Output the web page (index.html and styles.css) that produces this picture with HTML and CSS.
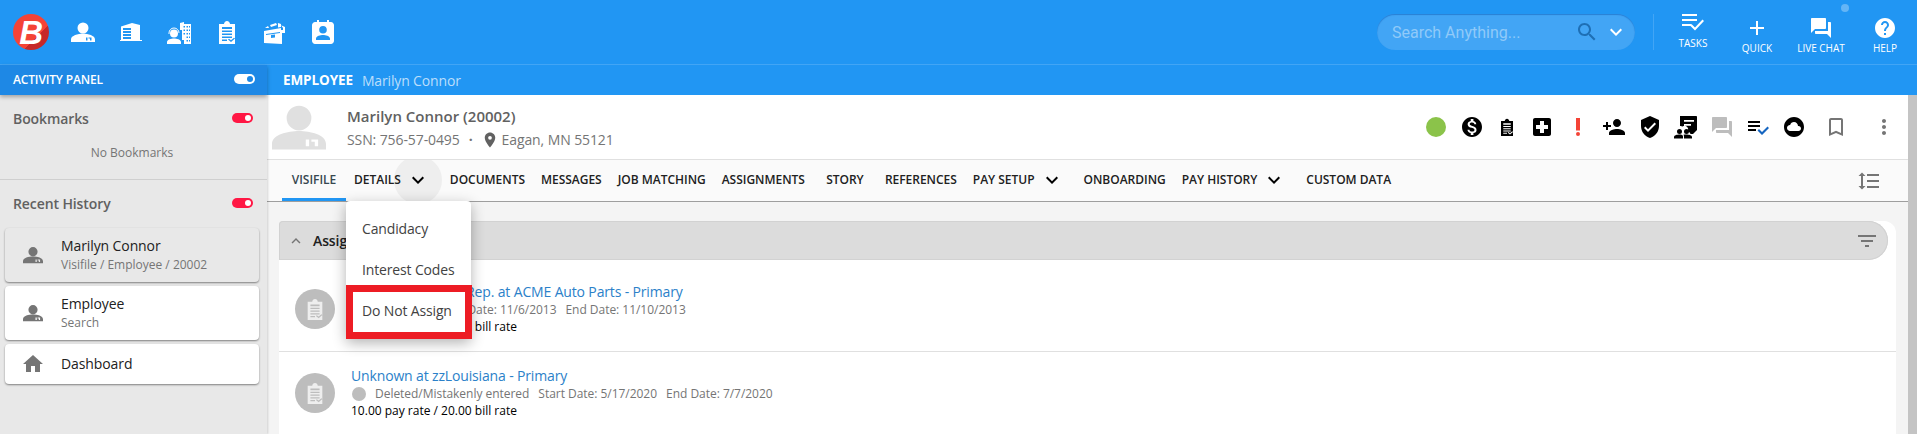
FILE: index.html
```html
<!DOCTYPE html>
<html lang="en">
<head>
<meta charset="utf-8">
<title>Employee - Marilyn Connor</title>
<link rel="stylesheet" href="styles.css">
</head>
<body>
<svg class="defs" width="0" height="0" aria-hidden="true">
  <symbol id="i-emp" viewBox="0 0 24 24"><path fill-rule="evenodd" d="M12 2.500a5.500 5.500 0 1 1 0 11 5.500 5.500 0 0 1 0-11zM0 22v-2.500C0 15.500 7 13.800 12 13.800s12 1.700 12 5.700V22zM15 17.500v3h1.500v-3zM17.500 17.500v1h1.500v2h1.500v-3z"/></symbol>
  <symbol id="i-building" viewBox="0 0 24 24"><path fill-rule="evenodd" d="M2 6.500 13 3l8 2v15h2v1H1v-1h1zM4 8v2h8V8zM4 11v2h8v-2zM4 14v2h8v-2zM4 17v2h8v-2z"/></symbol>
  <symbol id="i-center" viewBox="0 0 24 24"><path fill-rule="evenodd" d="M13 3l4-1v2h7v20h-7v-4h-2V10h-2zM16.500 6v1.500H18V6zM19.500 6v1.500H21V6zM22 6v1.500h1V6zM16.500 9.500V11H18V9.500zM19.500 9.500V11H21V9.500zM22 9.500V11h1V9.500zM16.500 13v1.500H18V13zM19.500 13v1.500H21V13zM22 13v1.500h1V13zM19.500 16.500V18H21v-1.500zM22 16.500V18h1v-1.500zM19.500 20v1.500H21V20zM22 20v1.500h1V20z"/><path d="M7 9.500a4 4 0 1 1 0 8 4 4 0 0 1 0-8zM0 24v-2c0-2.500 4.500-3.500 7-3.500s7 1 7 3.500v2z"/><path fill="none" stroke="currentColor" stroke-width="1" d="M2 14v-1a5 5 0 0 1 10 0"/></symbol>
  <symbol id="i-clip" viewBox="0 0 24 24"><path fill-rule="evenodd" d="M4 4h5c0-1.500 1.400-3 3-3s3 1.500 3 3h5v20H4zM7 7v2h10V7zM7 10.500v1.500h10v-1.500zM7 13.500V15h10v-1.500zM7 16.500V18h10v-1.500zM7 19.500V21h5v-1.500zM13 19.500l3 2.500 4-3.500-1-.8-3 2.500-2-1.500z"/></symbol>
  <symbol id="i-case" viewBox="0 0 24 24"><path fill-rule="evenodd" d="M1 11l17-3v2h2V8l-2-3-3-1-2-1 9 4v6h-3v11L1 23zM3 14v1l14-2v-1zM8 15v3l4-.5v-3z"/><path d="M2 8l3-2 1 2zM7 5l6-2 1 2-6 2zM15 3l3 1v3l-3 .5z"/></symbol>
  <symbol id="i-contact" viewBox="0 0 24 24"><path fill-rule="evenodd" d="M6 0h2v2h8V0h2v2h2c1.500 0 3 1.500 3 3v16c0 1.500-1.500 3-3 3H4c-1.500 0-3-1.500-3-3V5c0-1.500 1.500-3 3-3h2zM12 6a3.800 3.800 0 1 0 0 7.600A3.800 3.800 0 0 0 12 6zM5 20h14v-1.500c0-2.500-4.500-3.500-7-3.500s-7 1-7 3.500z"/></symbol>
  <symbol id="i-tasks" viewBox="0 0 24 24"><path d="M1 3h15v2H1zM1 8h15v2H1zM1 13h9v2H1zM23 10l-9 9.500-5-5 1.500-1.500 3.500 3.500 7.500-8z"/></symbol>
  <symbol id="i-plus" viewBox="0 0 24 24"><path d="M19 13h-6v6h-2v-6H5v-2h6V5h2v6h6v2z"/></symbol>
  <symbol id="i-forum" viewBox="0 0 24 24"><path d="M21 6h-2v9H6v2c0 .55.45 1 1 1h11l4 4V7c0-.55-.45-1-1-1zm-4 6V3c0-.55-.45-1-1-1H3c-.55 0-1 .45-1 1v14l4-4h10c.55 0 1-.45 1-1z"/></symbol>
  <symbol id="i-help" viewBox="0 0 24 24"><path d="M12 2C6.480 2 2 6.480 2 12s4.480 10 10 10 10-4.480 10-10S17.520 2 12 2zm1 17h-2v-2h2v2zm2.070-7.750l-.9.920C13.450 12.900 13 13.500 13 15h-2v-.5c0-1.100.45-2.100 1.170-2.830l1.240-1.260c.37-.36.590-.86.590-1.410 0-1.100-.9-2-2-2s-2 .9-2 2H8c0-2.210 1.790-4 4-4s4 1.790 4 4c0 .88-.36 1.680-.93 2.250z"/></symbol>
  <symbol id="i-search" viewBox="0 0 24 24"><path d="M15.500 14h-.79l-.28-.27C15.410 12.590 16 11.110 16 9.500 16 5.910 13.090 3 9.500 3S3 5.910 3 9.500 5.910 16 9.500 16c1.610 0 3.090-.59 4.230-1.570l.27.280v.79l5 4.990L20.490 19l-4.990-5zm-6 0C7.010 14 5 11.990 5 9.500S7.010 5 9.500 5 14 7.010 14 9.500 11.990 14 9.500 14z"/></symbol>
  <symbol id="i-down" viewBox="0 0 24 24"><path d="M16.590 8.590L12 13.170 7.410 8.590 6 10l6 6 6-6z"/></symbol>
  <symbol id="i-up" viewBox="0 0 24 24"><path d="M12 8l-6 6 1.410 1.410L12 10.830l4.590 4.580L18 14z"/></symbol>
  <symbol id="i-home" viewBox="0 0 24 24"><path d="M10 20v-6h4v6h5v-8h3L12 3 2 12h3v8z"/></symbol>
  <symbol id="i-pin" viewBox="0 0 24 24"><path d="M12 2C8.130 2 5 5.130 5 9c0 5.250 7 13 7 13s7-7.750 7-13c0-3.870-3.130-7-7-7zm0 9.500a2.500 2.500 0 0 1 0-5 2.500 2.500 0 0 1 0 5z"/></symbol>
  <symbol id="i-dollar" viewBox="0 0 24 24"><path d="M12 2C6.480 2 2 6.480 2 12s4.480 10 10 10 10-4.480 10-10S17.520 2 12 2zm1.410 16.090V20h-2.670v-1.930c-1.710-.36-3.160-1.460-3.270-3.400h1.960c.1 1.050.82 1.870 2.650 1.870 1.960 0 2.400-.98 2.400-1.590 0-.83-.44-1.610-2.670-2.140-2.480-.6-4.180-1.620-4.180-3.670 0-1.720 1.390-2.840 3.110-3.210V4h2.670v1.950c1.860.45 2.790 1.860 2.870 3.390H14.300c-.05-1.110-.64-1.870-2.220-1.870-1.500 0-2.400.68-2.400 1.640 0 .84.65 1.390 2.670 1.910s4.180 1.390 4.180 3.910c-.01 1.830-1.380 2.830-3.120 3.160z"/></symbol>
  <symbol id="i-hospital" viewBox="0 0 24 24"><path d="M19 3H5c-1.100 0-1.990.9-1.990 2L3 19c0 1.100.9 2 2 2h14c1.100 0 2-.9 2-2V5c0-1.100-.9-2-2-2zm-1 11h-4v4h-4v-4H6v-4h4V6h4v4h4v4z"/></symbol>
  <symbol id="i-alert" viewBox="0 0 24 24"><path d="M10 3h4v12.500h-4zM12 17a2 2 0 1 1 0 4 2 2 0 0 1 0-4z"/></symbol>
  <symbol id="i-add-person" viewBox="0 0 24 24"><path d="M15 12c2.210 0 4-1.790 4-4s-1.790-4-4-4-4 1.790-4 4 1.790 4 4 4zm-9-2V7H4v3H1v2h3v3h2v-3h3v-2H6zm9 4c-2.670 0-8 1.340-8 4v2h16v-2c0-2.660-5.330-4-8-4z"/></symbol>
  <symbol id="i-shield" viewBox="0 0 24 24"><path d="M12 1L3 5v6c0 5.550 3.840 10.740 9 12 5.160-1.260 9-6.450 9-12V5l-9-4zm-2 16l-4-4 1.410-1.410L10 14.170l6.590-6.590L18 9l-8 8z"/></symbol>
  <symbol id="i-feedback" viewBox="0 0 24 24"><path fill-rule="evenodd" d="M6 1h16c.6 0 1 .4 1 1v13l-4 4h-2.500c-.4-1.400-1.600-2.300-3-2.800a3.500 3.500 0 0 0-5-4.700A3.500 3.500 0 0 0 6 11zM10 5v1.800h10V5zM10 9v1.800h7V9z"/><path d="M5.500 14a2.500 2.500 0 1 1 0 5 2.500 2.500 0 0 1 0-5zM12.500 14a2.500 2.500 0 1 1 0 5 2.500 2.500 0 0 1 0-5zM0 23.500V22c0-1.800 3.500-2.500 5.500-2.500S9 20 9 21.500v2zM10 23.500v-2c0-.7-.2-1.300-.6-1.800.9-.2 2.100-.2 3.100-.2 2 0 5.500.7 5.500 2.500v1.500z"/></symbol>
  <symbol id="i-check-list" viewBox="0 0 24 24"><path d="M14 10H2v2h12v-2zm0-4H2v2h12V6zM2 16h8v-2H2v2z"/><path fill="#1565c0" d="M21.500 11.500L23 13l-6.990 7-4.510-4.500L13 14l3.010 3 5.490-5.500z"/></symbol>
  <symbol id="i-cloud" viewBox="0 0 24 24"><path d="M12 2C6.480 2 2 6.480 2 12s4.480 10 10 10 10-4.480 10-10S17.520 2 12 2zm4.500 14H8c-1.660 0-3-1.340-3-3s1.340-3 3-3l.14.01C8.580 8.280 10.130 7 12 7c2.210 0 4 1.790 4 4h.5c1.380 0 2.500 1.120 2.500 2.500S17.880 16 16.500 16z"/></symbol>
  <symbol id="i-bookmark" viewBox="0 0 24 24"><path d="M17 3H7c-1.100 0-1.990.9-1.990 2L5 21l7-3 7 3V5c0-1.100-.9-2-2-2zm0 15l-5-2.180L7 18V5h10v13z"/></symbol>
  <symbol id="i-more" viewBox="0 0 24 24"><path d="M12 8c1.100 0 2-.9 2-2s-.9-2-2-2-2 .9-2 2 .9 2 2 2zm0 2c-1.100 0-2 .9-2 2s.9 2 2 2 2-.9 2-2-.9-2-2-2zm0 6c-1.100 0-2 .9-2 2s.9 2 2 2 2-.9 2-2-.9-2-2-2z"/></symbol>
  <symbol id="i-spacing" viewBox="0 0 24 24"><path d="M6 7h2.500L5 3.500 1.500 7H4v10H1.500L5 20.500 8.500 17H6V7zm4-2v2h12V5H10zm0 14h12v-2H10v2zm0-6h12v-2H10v2z"/></symbol>
  <symbol id="i-filter" viewBox="0 0 24 24"><path d="M10 18h4v-2h-4v2zM3 6v2h18V6H3zm3 7h12v-2H6v2z"/></symbol>
</svg>

<header class="topbar">
  <div class="logo"><span class="logo-b">B</span></div>
  <nav class="appnav">
    <a class="appnav-item"><svg class="ic"><use href="#i-emp"/></svg></a>
    <a class="appnav-item"><svg class="ic"><use href="#i-building"/></svg></a>
    <a class="appnav-item"><svg class="ic"><use href="#i-center"/></svg></a>
    <a class="appnav-item"><svg class="ic"><use href="#i-clip"/></svg></a>
    <a class="appnav-item"><svg class="ic"><use href="#i-case"/></svg></a>
    <a class="appnav-item"><svg class="ic"><use href="#i-contact"/></svg></a>
  </nav>
  <div class="search">
    <span class="search-text">Search Anything...</span>
    <svg class="ic search-ic"><use href="#i-search"/></svg>
    <svg class="ic search-chev"><use href="#i-down"/></svg>
  </div>
  <div class="divider"></div>
  <a class="tool tool-high"><svg class="ic"><use href="#i-tasks"/></svg><span class="tool-label">TASKS</span></a>
  <a class="tool"><svg class="ic"><use href="#i-plus"/></svg><span class="tool-label">QUICK</span></a>
  <a class="tool tool-chat"><svg class="ic"><use href="#i-forum"/></svg><span class="tool-label">LIVE CHAT</span><span class="chat-dot"></span></a>
  <a class="tool"><svg class="ic"><use href="#i-help"/></svg><span class="tool-label">HELP</span></a>
</header>

<div class="subbar">
  <div class="panel-head"><span>ACTIVITY PANEL</span><span class="toggle toggle-white"></span></div>
  <div class="crumb"><strong class="crumb-type">EMPLOYEE</strong><span class="crumb-name">Marilyn Connor</span></div>
</div>

<div class="layout">
  <aside class="side">
    <section class="side-bookmarks">
      <div class="side-title"><span>Bookmarks</span><span class="toggle toggle-red"></span></div>
      <p class="side-empty">No Bookmarks</p>
    </section>
    <section class="side-history">
      <div class="side-title"><span>Recent History</span><span class="toggle toggle-red"></span></div>
      <div class="hist-list">
        <a class="hist hist-active"><svg class="ic hist-ic"><use href="#i-emp"/></svg><div><div class="hist-name">Marilyn Connor</div><div class="hist-sub">Visifile / Employee / 20002</div></div></a>
        <a class="hist"><svg class="ic hist-ic"><use href="#i-emp"/></svg><div><div class="hist-name">Employee</div><div class="hist-sub">Search</div></div></a>
        <a class="hist hist-short"><svg class="ic hist-home"><use href="#i-home"/></svg><div class="hist-name">Dashboard</div></a>
      </div>
    </section>
  </aside>

  <main class="main">
    <div class="person">
      <svg class="avatar"><use href="#i-emp"/></svg>
      <div class="person-info">
        <div class="person-name">Marilyn Connor (20002)</div>
        <div class="person-meta"><span>SSN: 756-57-0495</span><span class="sep">·</span><svg class="pin"><use href="#i-pin"/></svg><span>Eagan, MN 55121</span></div>
      </div>
      <div class="actions">
        <span class="slot"><span class="status-dot"></span></span>
        <span class="slot slot-tight"><svg class="ic"><use href="#i-dollar"/></svg></span>
        <span class="slot slot-tight"><svg class="ic-sm"><use href="#i-clip"/></svg></span>
        <span class="slot"><svg class="ic"><use href="#i-hospital"/></svg></span>
        <span class="slot slot-alert"><svg class="ic"><use href="#i-alert"/></svg></span>
        <span class="slot"><svg class="ic"><use href="#i-add-person"/></svg></span>
        <span class="slot"><svg class="ic"><use href="#i-shield"/></svg></span>
        <span class="slot"><svg class="ic"><use href="#i-feedback"/></svg></span>
        <span class="slot slot-muted"><svg class="ic"><use href="#i-forum"/></svg></span>
        <span class="slot"><svg class="ic"><use href="#i-check-list"/></svg></span>
        <span class="slot"><svg class="ic"><use href="#i-cloud"/></svg></span>
        <span class="slot slot-grey slot-book"><svg class="ic"><use href="#i-bookmark"/></svg></span>
        <span class="slot slot-grey slot-more"><svg class="ic"><use href="#i-more"/></svg></span>
      </div>
    </div>

    <nav class="tabs">
      <a class="tab tab-active">VISIFILE</a>
      <a class="tab tab-drop"><span class="tab-label">DETAILS</span><span class="chev chev-hover"><svg class="ic"><use href="#i-down"/></svg></span></a>
      <a class="tab">DOCUMENTS</a>
      <a class="tab">MESSAGES</a>
      <a class="tab">JOB MATCHING</a>
      <a class="tab">ASSIGNMENTS</a>
      <a class="tab">STORY</a>
      <a class="tab">REFERENCES</a>
      <a class="tab tab-drop"><span class="tab-label">PAY SETUP</span><span class="chev"><svg class="ic"><use href="#i-down"/></svg></span></a>
      <a class="tab">ONBOARDING</a>
      <a class="tab tab-drop"><span class="tab-label">PAY HISTORY</span><span class="chev"><svg class="ic"><use href="#i-down"/></svg></span></a>
      <a class="tab">CUSTOM DATA</a>
      <svg class="ic tabs-spacing"><use href="#i-spacing"/></svg>
    </nav>

    <div class="content">
      <section class="card">
        <div class="card-head">
          <svg class="card-chev"><use href="#i-up"/></svg>
          <span class="card-title">Assignments</span>
          <svg class="ic card-filter"><use href="#i-filter"/></svg>
        </div>
        <article class="row row-first">
          <div class="row-circle"><svg class="row-ic"><use href="#i-clip"/></svg></div>
          <div class="row-body">
            <a class="row-link">Customer Service Rep. at ACME Auto Parts - Primary</a>
            <div class="row-meta"><span class="row-dot"></span><span class="row-status">Complete</span><span>Start Date: 11/6/2013</span><span>End Date: 11/10/2013</span></div>
            <div class="row-rate">10.00 pay rate / 20.00 bill rate</div>
          </div>
        </article>
        <article class="row">
          <div class="row-circle"><svg class="row-ic"><use href="#i-clip"/></svg></div>
          <div class="row-body">
            <a class="row-link">Unknown at zzLouisiana - Primary</a>
            <div class="row-meta"><span class="row-dot"></span><span class="row-status">Deleted/Mistakenly entered</span><span>Start Date: 5/17/2020</span><span>End Date: 7/7/2020</span></div>
            <div class="row-rate">10.00 pay rate / 20.00 bill rate</div>
          </div>
        </article>
      </section>
    </div>

    <div class="menu">
      <a class="menu-item">Candidacy</a>
      <a class="menu-item">Interest Codes</a>
      <a class="menu-item">Do Not Assign</a>
      <div class="callout"></div>
    </div>
  </main>
  <div class="scrollbar"></div>
</div>
</body>
</html>
```

FILE: styles.css
```css
* { box-sizing: border-box; }
html, body { margin: 0; padding: 0; height: 434px; overflow: hidden; }
body { font-family: "Open Sans", "Liberation Sans", sans-serif; font-size: 14px; letter-spacing: -.1px; color: #212121; background: #f4f4f4; }
.defs { display: block; height: 0; }
.ic { width: 24px; height: 24px; fill: currentColor; flex: none; display: block; }
.ic-sm { width: 18px; height: 18px; fill: currentColor; flex: none; display: block; }

/* top bar */
.topbar { display: flex; align-items: center; height: 65px; background: #2196f3; border-bottom: 1px solid #42a5f5; color: #fff; }
.logo { width: 36px; height: 36px; margin-left: 13px; margin-right: 10px; border-radius: 50%; flex: none; display: flex; align-items: center; justify-content: center; background: linear-gradient(135deg, #f44336 0 64%, #c62828 64% 100%); }
.logo-b { font-family: "Liberation Sans", sans-serif; font-weight: 700; font-style: italic; font-size: 33px; line-height: 1; color: #fff; }
.appnav { display: flex; }
.appnav-item { width: 48px; display: flex; justify-content: center; }
.search { margin-left: auto; width: 258px; height: 36px; border-radius: 18px; background: #42a5f5; box-shadow: inset 0 1px 1px rgba(21, 101, 192, .6); display: flex; align-items: center; padding-left: 15px; flex: none; }
.search-text { font-family: Roboto, sans-serif; font-size: 16px; letter-spacing: 0; color: #90caf9; flex: 1; }
.search-ic { color: #1e6fb5; }
.search-chev { margin: 0 7px 0 5px; }
.divider { width: 1px; height: 36px; background: #42a5f5; margin: 0 7px 0 18px; flex: none; }
.tool { position: relative; width: 64px; height: 64px; padding-top: 16px; display: flex; flex-direction: column; align-items: center; flex: none; }
.tool-high { padding-top: 11px; }
.tool-label { font-size: 10px; letter-spacing: 0; line-height: 14px; margin-top: 1px; white-space: nowrap; }
.chat-dot { position: absolute; left: 52px; top: 4px; width: 8px; height: 8px; border-radius: 50%; background: #64b5f6; }

/* sub bar */
.subbar { display: flex; height: 30px; background: #2196f3; color: #fff; }
.panel-head { position: relative; z-index: 3; width: 267px; display: flex; align-items: center; justify-content: space-between; padding: 0 12px 2px 13px; background: #1e88e5; font-size: 12px; font-weight: 600; letter-spacing: -.15px; box-shadow: 0 2px 4px rgba(0, 0, 0, .3); flex: none; }
.crumb { display: flex; align-items: center; padding-left: 16px; }
.crumb-type { font-weight: 700; font-size: 13.500px; margin-right: 9px; }
.crumb-name { color: #bbdefb; font-size: 14px; letter-spacing: -.15px; }
.toggle { position: relative; display: block; width: 21px; height: 10px; border-radius: 5px; flex: none; }
.toggle::after { content: ""; position: absolute; right: 2px; top: 2px; width: 6px; height: 6px; border-radius: 50%; }
.toggle-white { background: #fff; }
.toggle-white::after { background: #1e88e5; }
.toggle-red { background: #ff1744; }
.toggle-red::after { background: #fff; }

/* layout */
.layout { display: flex; height: 339px; }
.side { width: 267px; flex: none; background: #e8e8e8; box-shadow: 1px 0 2px rgba(0, 0, 0, .15); position: relative; z-index: 2; }
.side-bookmarks { height: 85px; border-bottom: 1px solid #cfcfcf; padding-top: 12px; }
.side-title { display: flex; align-items: center; justify-content: space-between; padding: 0 14px 0 13px; height: 22px; font-size: 14px; font-weight: 600; color: #616161; }
.side-empty { margin: 16px 0 0; padding-right: 3px; text-align: center; font-size: 12px; letter-spacing: 0; line-height: 16px; color: #757575; }
.side-history { padding-top: 12px; }
.hist-list { display: flex; flex-direction: column; gap: 4px; padding: 14px 8px 0 5px; }
.hist { display: flex; align-items: center; height: 54px; background: #fff; border-radius: 4px; box-shadow: 0 1px 2px rgba(0, 0, 0, .45); }
.hist-active { background: #e8e8e8; }
.hist-short { height: 40px; }
.hist-ic { width: 20px; height: 20px; color: #757575; margin: 0 18px; }
.hist-home { width: 24px; height: 24px; fill: #757575; margin: 0 16px; flex: none; }
.hist-name { font-size: 14px; line-height: 20px; color: #212121; }
.hist-sub { font-size: 12px; letter-spacing: 0; line-height: 18px; color: #757575; }

/* main */
.main { position: relative; flex: 1; min-width: 0; display: flex; flex-direction: column; }
.person { display: flex; align-items: center; height: 65px; background: #fff; border-bottom: 1px solid #e0e0e0; flex: none; }
.avatar { width: 54px; height: 56px; margin-left: 5px; margin-right: 21px; fill: #e0e0e0; flex: none; }
.person-info { padding-top: 2px; }
.person-name { font-size: 15px; font-weight: 600; letter-spacing: 0; line-height: 20px; color: #616161; }
.person-meta { display: flex; align-items: center; font-size: 14px; line-height: 22px; color: #757575; margin-top: 3px; }
.sep { margin: 0 8px 0 9px; font-weight: 700; }
.pin { width: 18px; height: 18px; fill: #616161; margin-right: 3px; }
.actions { margin-left: auto; display: flex; align-items: center; padding-right: 6px; }
.slot { width: 36px; height: 36px; display: flex; align-items: center; justify-content: center; color: #000; flex: none; }
.slot-tight { width: 35px; }
.status-dot { width: 20px; height: 20px; border-radius: 50%; background: #8bc34a; }
.slot-alert { color: #f44336; }
.slot-muted { color: #bdbdbd; }
.slot-grey { color: #757575; }
.slot-book { margin-left: 6px; }
.slot-more { margin-left: 12px; }

.tabs { display: flex; align-items: center; height: 42px; background: #fafafa; border-bottom: 1px solid #9e9e9e; overflow: hidden; flex: none; padding-left: 15px; padding-right: 27px; }
.tab { min-width: 64px; height: 41px; padding: 0 8px 2px; display: flex; align-items: center; justify-content: center; font-size: 12px; font-weight: 600; letter-spacing: -.02px; color: #212121; white-space: nowrap; flex: none; }
.tab-active { border-bottom: 3px solid #2196f3; padding-bottom: 0; padding-top: 1px; color: #37474f; }
.tab-drop { padding-right: 0; }
.tab-label { position: relative; z-index: 1; }
.chev { width: 48px; height: 48px; border-radius: 50%; margin-left: -7px; display: flex; align-items: center; justify-content: center; color: #000; flex: none; }
.chev-hover { background: #eee; }
.tabs-spacing { margin-left: auto; color: #757575; }

.content { flex: 1; padding: 19px 12px 0 12px; overflow: hidden; }
.card { background: #fff; height: 400px; border-radius: 4px 12px 0 0; }
.card-head { display: flex; align-items: center; height: 39px; margin-right: 8px; padding-left: 8px; background: #dcdcdc; border-radius: 4px 20px 20px 0; box-shadow: inset 0 0 0 1px #d2d2d2; }
.card-chev { width: 18px; height: 18px; fill: #757575; }
.card-title { margin-left: 8px; font-size: 14px; font-weight: 600; color: #212121; }
.card-filter { margin-left: auto; margin-right: 9px; color: #757575; }
.row { display: flex; align-items: flex-start; height: 92px; padding: 21px 0 0 16px; border-bottom: 1px solid #e0e0e0; }
.row-first { padding-top: 29px; }
.row-circle { width: 40px; height: 40px; border-radius: 50%; background: #bdbdbd; display: flex; align-items: center; justify-content: center; flex: none; }
.row-ic { width: 22px; height: 22px; fill: #eee; }
.row-body { margin: -7px 0 0 16px; }
.row-link { display: block; font-size: 14px; letter-spacing: -.15px; line-height: 20px; color: #2b81c9; }
.row-meta { display: flex; align-items: center; gap: 9px; font-size: 12px; letter-spacing: -.03px; line-height: 18px; color: #757575; margin-top: -1px; }
.row-dot { width: 14px; height: 14px; border-radius: 50%; background: #bdbdbd; margin-left: 1px; }
.row-rate { font-size: 12px; letter-spacing: 0; line-height: 16px; color: #000; margin-top: 0; }

/* dropdown + annotation */
.menu { position: absolute; left: 79px; top: 106px; width: 125px; height: 138px; padding-top: 7px; background: #fff; border-radius: 4px; box-shadow: 0 4px 14px rgba(0, 0, 0, .3); z-index: 5; }
.menu-item { display: flex; align-items: center; height: 41px; padding-left: 16px; font-size: 14px; letter-spacing: -.15px; color: #424242; }
.callout { position: absolute; left: 0; top: 84px; width: 126px; height: 54px; border: 7px solid #ed1c24; }

.scrollbar { width: 9px; flex: none; background: #c4c4c4; }
```
